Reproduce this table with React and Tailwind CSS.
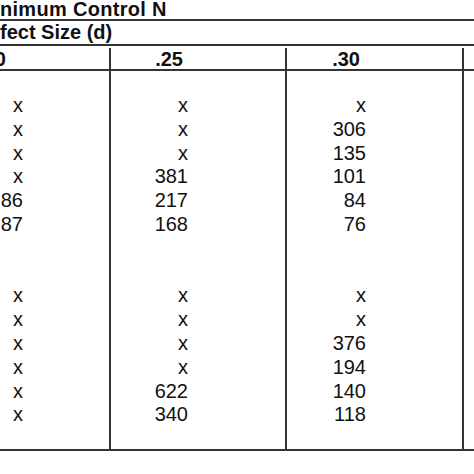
import React from "react";

const col1 = ["x", "x", "x", "x", "86", "87", "", "", "x", "x", "x", "x", "x", "x"];
const col2 = ["x", "x", "x", "381", "217", "168", "", "", "x", "x", "x", "x", "622", "340"];
const col3 = ["x", "306", "135", "101", "84", "76", "", "", "x", "x", "376", "194", "140", "118"];

function Cells({ values }) {
  return values.map((v, i) => (
    <div key={i} className="h-[23.8px] leading-[23.8px] whitespace-nowrap">
      {v || "\u00a0"}
    </div>
  ));
}

export default function App() {
  return (
    <div className="w-[474px] h-[474px] overflow-hidden bg-white text-[#111] font-['Liberation_Sans',Arial,sans-serif]">
      {/* table title */}
      <div className="h-[21px] border-b-2 border-[#333] text-[20px] font-bold leading-[19px] tracking-[0.3px] whitespace-nowrap">
        nimum Control N
      </div>
      <div className="h-[25px] border-b-2 border-[#333] pt-[2px] text-[20px] font-bold leading-[19px] whitespace-nowrap">
        fect Size (d)
      </div>

      {/* header row */}
      <div className="grid grid-cols-[111px_176px_177px_1fr] h-[25px] border-b-2 border-[#333] pt-[2px] text-[20px] font-bold leading-[22px]">
        <div className="flex justify-end border-r-2 border-[#333] pr-[103px] whitespace-nowrap">
          <span>.20</span>
        </div>
        <div className="border-r-2 border-[#333] pr-[102px] text-right">.25</div>
        <div className="border-r-2 border-[#333] pr-[102px] text-right">.30</div>
        <div></div>
      </div>

      {/* body */}
      <div className="grid grid-cols-[111px_176px_177px_1fr] h-[380px] border-b-2 border-[#333] text-[20px]">
        <div className="border-r-2 border-[#333] pt-[23px] pr-[86px] text-right">
          <Cells values={col1} />
        </div>
        <div className="border-r-2 border-[#333] pt-[23px] pr-[97px] text-right">
          <Cells values={col2} />
        </div>
        <div className="border-r-2 border-[#333] pt-[23px] pr-[96px] text-right">
          <Cells values={col3} />
        </div>
        <div></div>
      </div>
    </div>
  );
}
